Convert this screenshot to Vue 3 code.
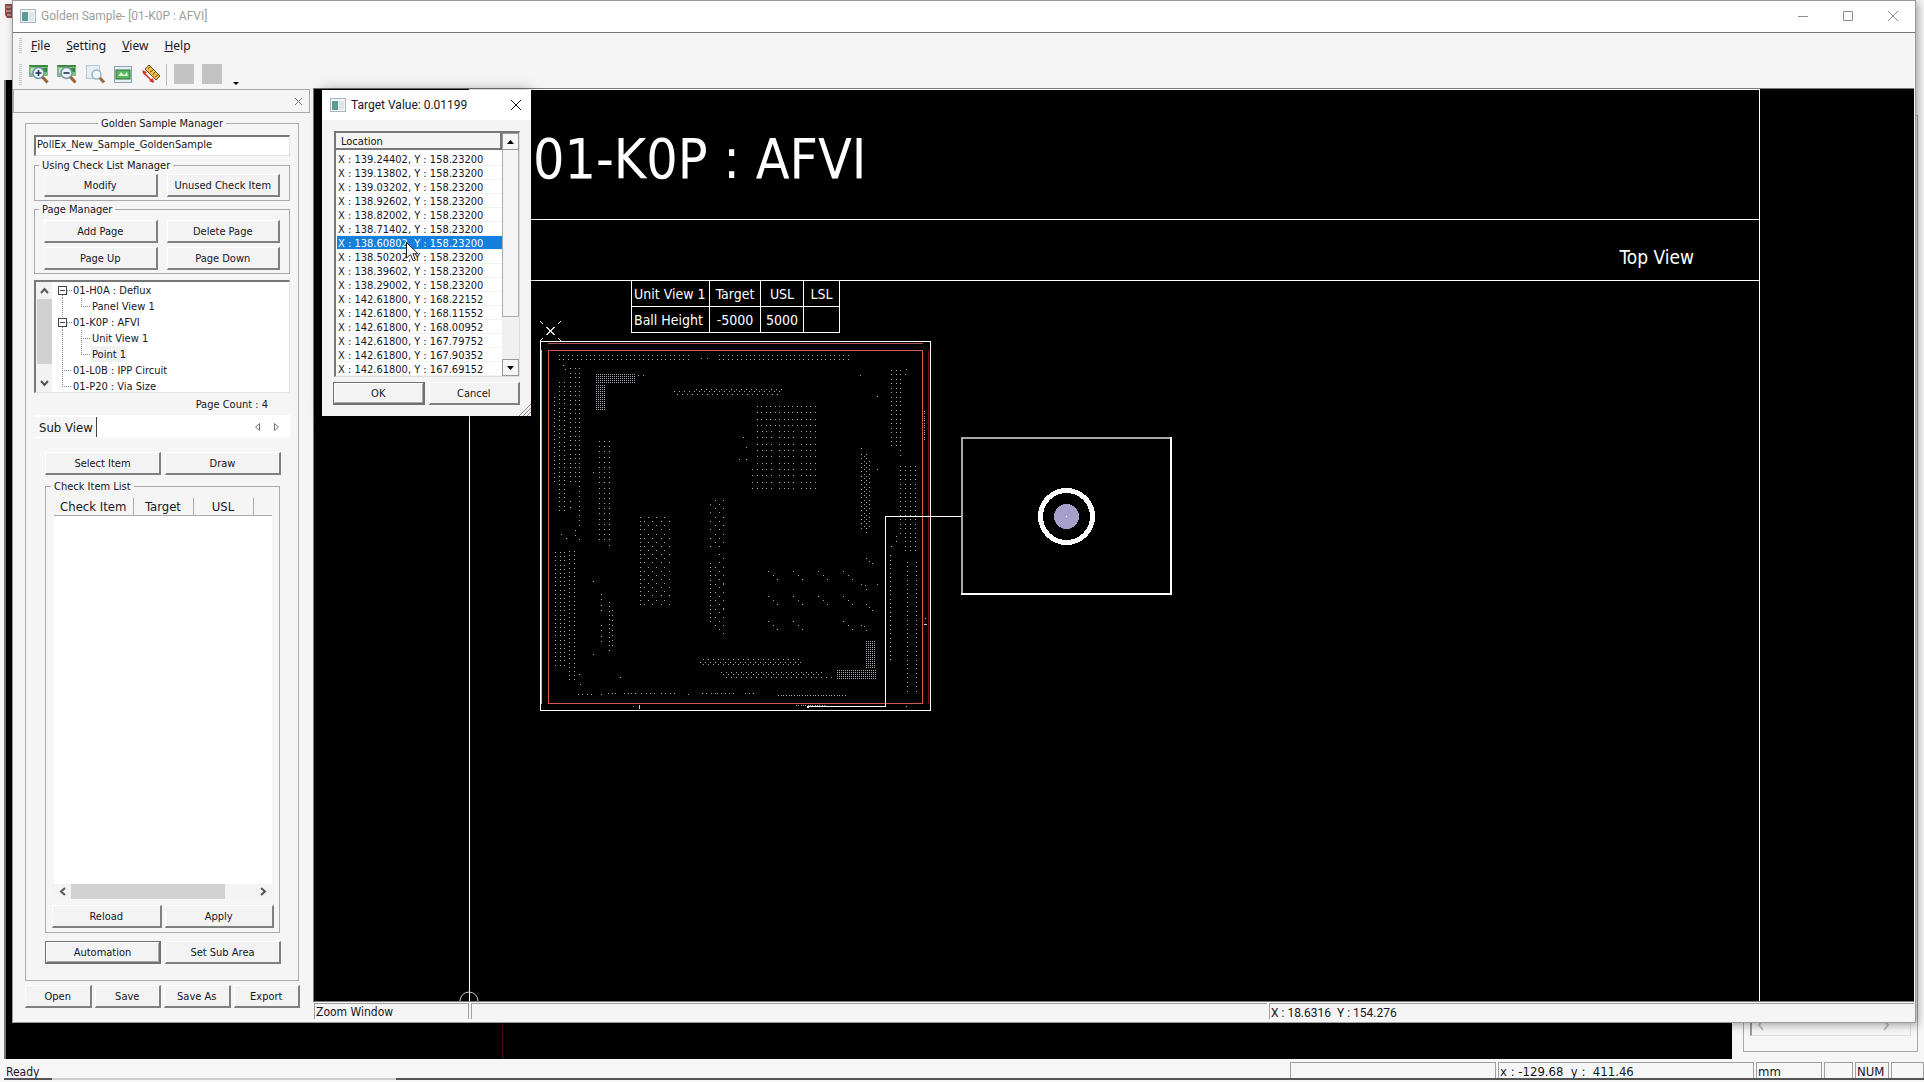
<script setup>
import { ref } from 'vue'

const menus = ['File', 'Setting', 'View', 'Help']
const sampleName = ref('PollEx_New_Sample_GoldenSample')

const tree = [
  { text: '01-H0A : Deflux', level: 0, box: true, path: 'M8 13V16M13 8H18' },
  { text: 'Panel View 1', level: 1, path: 'M8 0V16M27 0V8H36' },
  { text: '01-K0P : AFVI', level: 0, box: true, path: 'M8 0V3M8 13V16M13 8H18' },
  { text: 'Unit View 1', level: 1, path: 'M8 0V16M27 0V16M27 8H36' },
  { text: 'Point 1', level: 1, active: true, path: 'M8 0V16M27 0V8H36' },
  { text: '01-L0B : IPP Circuit', level: 0, path: 'M8 0V16M8 8H18' },
  { text: '01-P20 : Via Size', level: 0, path: 'M8 0V8H18' },
]

const locations = [
  ['139.24402', '158.23200'], ['139.13802', '158.23200'], ['139.03202', '158.23200'],
  ['138.92602', '158.23200'], ['138.82002', '158.23200'], ['138.71402', '158.23200'],
  ['138.60802', '158.23200'], ['138.50202', '158.23200'], ['138.39602', '158.23200'],
  ['138.29002', '158.23200'], ['142.61800', '168.22152'], ['142.61800', '168.11552'],
  ['142.61800', '168.00952'], ['142.61800', '167.79752'], ['142.61800', '167.90352'],
  ['142.61800', '167.69152'],
]
const selected = ref(6)

// Ball pads, in thirds of a pixel: x, y, columns, rows, column pitch, row pitch
const grids = [
  [88, 257, 30, 2, 13.3, 12], [515, 265, 2, 1, 18, 0], [568, 257, 30, 2, 13.3, 12],
  [121, 295, 3, 26, 14, 13.5], [88, 337, 2, 31, 15, 12.8], [73, 382, 1, 21, 0, 12.6],
  [149, 650, 1, 9, 0, 14.4], [199, 313, 20, 5, 6, 6], [199, 345, 5, 13, 6, 6],
  [326, 316, 2, 1, 14, 0], [208, 514, 3, 20, 15, 15.5],
  [682, 409, 14, 4, 13.3, 19], [682, 484, 4, 10, 13.5, 19], [748, 484, 4, 10, 13.5, 19],
  [814, 484, 4, 10, 13.5, 19], [668, 598, 1, 4, 0, 19],
  [1085, 301, 3, 18, 13, 13.3], [1111, 541, 1, 2, 0, 15], [1184, 424, 1, 13, 0, 7],
  [994, 553, 1, 18, 0, 13], [1010, 553, 1, 18, 0, 13], [1002, 560, 1, 17, 0, 13], [1018, 573, 1, 16, 0, 13],
  [1112, 589, 1, 16, 0, 13.3], [1126, 589, 3, 20, 15.5, 13.3],
  [1082, 857, 1, 25, 0, 13], [1132, 877, 2, 30, 28, 13.3],
  [331, 742, 4, 11, 24, 24.8], [343, 754, 4, 11, 25, 24.8], [331, 754, 1, 11, 0, 24.8], [418, 754, 1, 11, 0, 24.8],
  [541, 703, 1, 6, 0, 25.2], [568, 703, 1, 6, 0, 25.2], [555, 691, 2, 6, 26, 25.2],
  [541, 880, 1, 8, 0, 25], [568, 853, 1, 10, 0, 25], [555, 892, 2, 8, 26, 25],
  [541, 892, 1, 7, 0, 25], [581, 866, 1, 10, 0, 25],
  [76, 847, 3, 28, 13.5, 12.5], [118, 844, 2, 32, 16, 12.4],
  [214, 973, 1, 4, 0, 16], [214, 1066, 1, 4, 0, 16], [238, 997, 1, 12, 0, 13], [247, 1020, 1, 8, 0, 15],
  [433, 364, 22, 1, 15, 0], [499, 358, 18, 1, 15, 0], [443, 373, 21, 1, 15, 0],
  [520, 1168, 20, 1, 15, 0], [512, 1176, 21, 1, 15, 0], [520, 1184, 20, 1, 15, 0],
  [574, 1207, 21, 1, 15, 0], [581, 1214, 20, 1, 15, 0], [588, 1222, 22, 1, 15, 0],
  [1009, 1114, 5, 14, 6, 6], [921, 1201, 20, 5, 6, 6],
  [145, 1273, 4, 1, 13, 0], [214, 1273, 1, 1, 0, 0], [235, 1270, 3, 1, 11, 0], [283, 1270, 4, 1, 11, 0],
  [335, 1270, 4, 1, 13, 0], [394, 1270, 4, 1, 13, 0], [475, 1273, 1, 1, 0, 0], [517, 1270, 4, 1, 13, 0],
  [562, 1270, 5, 1, 12, 0], [645, 1270, 3, 1, 13, 0], [745, 1276, 26, 1, 8, 0], [799, 1306, 13, 1, 7, 0],
]
const singles = [
  [640, 502], [650, 532], [628, 568], [650, 568], [992, 316], [1042, 380], [1042, 598], [1042, 943],
  [190, 607], [190, 934], [190, 1153], [271, 1222], [101, 286], [107, 298], [1129, 298], [1126, 313],
  [994, 535], [1010, 787], [1100, 800], [1100, 814], [1085, 829], [95, 793], [109, 805], [137, 781],
  [149, 808], [137, 796], [121, 695], [121, 712], [149, 1213], [152, 1243], [239, 826], [1009, 865],
  [1018, 874], [1027, 880], [994, 943], [1006, 946], [1009, 958], [1009, 1003], [1018, 1012], [1027, 1021],
  [994, 1066], [1002, 1070], [1009, 1081], [310, 1309], [1129, 1309], [1186, 1046],
]
for (const y of [904, 979, 1053]) {
  for (const x of [716, 790, 865, 940]) {
    if (x === 865 && y === 1053) continue
    singles.push([x, y], [x + 14, y + 12], [x + 27, y + 24])
  }
}
function padPath() {
  const at = (x, y) => `M${Math.round((x - 1) / 3)} ${Math.round((y - 1) / 3)}h1v1h-1z`
  let d = ''
  for (const [x, y, nx, ny, dx, dy] of grids)
    for (let i = 0; i < nx; i++) for (let j = 0; j < ny; j++) d += at(x + i * dx, y + j * dy)
  for (const [x, y] of singles) d += at(x, y)
  return d
}
const pads = padPath()
</script>

<template>
  <div class="desk">
    <div class="back-app">
      <svg class="back-icon" width="7" height="16" viewBox="0 0 7 16"><path d="M0 1H7V15H2L0 12Z" fill="#8d4a48" /><path d="M1 4H6M1 8H6M2 12H6" stroke="#d8c0be" /></svg>
      <div class="back-canvas"><i class="red-axis"></i></div>
      <div class="back-side">
        <div class="back-group">
          <div class="back-list">
            <svg width="8" height="12" viewBox="0 0 8 12"><path d="M6 1L2 6L6 11" /></svg>
            <svg width="8" height="12" viewBox="0 0 8 12"><path d="M2 1L6 6L2 11" /></svg>
          </div>
        </div>
      </div>
    </div>
    <footer class="back-status">
      <span class="ready">Ready</span>
      <span class="cell w206"></span>
      <span class="cell w256">x : -129.68&nbsp; y :&nbsp; 411.46</span>
      <span class="cell w66">mm</span>
      <span class="cell w29"></span>
      <span class="cell w34">NUM</span>
      <span class="cell w33"></span>
    </footer>
    <div class="edge"><i class="dark short"></i><i class="pale"></i><i class="dark long"></i></div>

    <main class="window">
      <header class="titlebar">
        <svg width="16" height="14" viewBox="0 0 16 14"><rect x=".5" y=".5" width="15" height="13" fill="#f4f6f8" stroke="#a9b4bc" /><rect x="2" y="3" width="6" height="9" fill="#5c9c94" /><rect x="9" y="3" width="5" height="9" fill="#dfe6ea" /></svg>
        <h1>Golden Sample- [01-K0P : AFVI]</h1>
        <div class="win-buttons">
          <button aria-label="Minimize"><svg width="12" height="12"><path d="M1 6.5H11" /></svg></button>
          <button aria-label="Maximize"><svg width="12" height="12"><path d="M1.500 1.500H10.500V10.500H1.500Z" /></svg></button>
          <button aria-label="Close"><svg width="12" height="12"><path d="M1 1L11 11M11 1L1 11" /></svg></button>
        </div>
      </header>

      <nav class="menubar">
        <i class="grip"></i>
        <button v-for="m in menus" :key="m"><u>{{ m[0] }}</u>{{ m.slice(1) }}</button>
      </nav>

      <div class="toolbar">
        <i class="grip"></i>
        <button aria-label="Zoom in">
          <svg width="20" height="20" viewBox="0 0 20 20"><rect x="0" y="1" width="19" height="11" fill="#7cc47c" /><path d="M0 2H19" stroke="#3a8a44" stroke-width="2" /><path d="M0 12.500H4M.5 2V12" stroke="#8fa3b4" /><path d="M13 4H18V8H15Z" fill="#2f8a3c" /><path d="M2 4H8V9H2Z" fill="#b9e6b4" /><circle cx="9.500" cy="9" r="5.500" fill="#e8f3fb" stroke="#7892a8" stroke-width="1.500" /><path d="M6.500 9H12.500M9.500 6V12" stroke="#1c3250" stroke-width="1.600" /><path d="M13.500 13L18.500 18.500" stroke="#9a6230" stroke-width="3" /></svg>
        </button>
        <button aria-label="Zoom out">
          <svg width="20" height="20" viewBox="0 0 20 20"><rect x="0" y="1" width="19" height="11" fill="#7cc47c" /><path d="M0 2H19" stroke="#3a8a44" stroke-width="2" /><path d="M0 12.500H4M.5 2V12" stroke="#8fa3b4" /><path d="M13 4H18V8H15Z" fill="#2f8a3c" /><path d="M2 4H8V9H2Z" fill="#b9e6b4" /><circle cx="9.500" cy="9" r="5.500" fill="#e8f3fb" stroke="#7892a8" stroke-width="1.500" /><path d="M6.500 9H12.500" stroke="#1c3250" stroke-width="1.600" /><path d="M13.500 13L18.500 18.500" stroke="#9a6230" stroke-width="3" /></svg>
        </button>
        <button aria-label="Zoom window">
          <svg width="20" height="20" viewBox="0 0 20 20"><rect x="1.500" y="1.500" width="13" height="13" fill="#e3eff9" stroke="#7e99b4" stroke-dasharray="1 1" /><circle cx="11.500" cy="10.500" r="4.500" fill="#eff7fd" stroke="#9db2c4" stroke-width="1.500" /><path d="M15 14L19 18.500" stroke="#a56a36" stroke-width="3" /></svg>
        </button>
        <button aria-label="Zoom fit">
          <svg width="20" height="20" viewBox="0 0 20 20"><rect x="1.500" y="2.500" width="17" height="16" fill="#e2f0f8" stroke="#35506a" stroke-dasharray="1 1" /><rect x="3" y="6" width="14" height="9" fill="#5cb562" stroke="#2a7434" /><path d="M5 12L8 8L11 11L14 8L15 12Z" fill="#d2f2ca" /></svg>
        </button>
        <button aria-label="Measure">
          <svg width="20" height="20" viewBox="0 0 20 20"><path d="M8 1L19 12L15 16L4 5Z" fill="#f0bf4c" stroke="#6f4d14" /><path d="M9 3L7 5M12 6L9 8M14 8L12 11M17 11L14 13" stroke="#6f4d14" /><path d="M2 8L12 18" stroke="#d8302a" stroke-width="1.600" /><path d="M1 6L6 8L3 11ZM13 19L8 17L12 14Z" fill="#d8302a" /></svg>
        </button>
        <i class="rule"></i>
        <button aria-label="Tool 1" disabled class="blank"></button>
        <button aria-label="Tool 2" disabled class="blank"></button>
        <svg class="more" width="6" height="3" viewBox="0 0 6 3"><path d="M0 0H6L3 3Z" /></svg>
      </div>

      <div class="body">
        <aside class="side">
          <div class="pane-head"><button aria-label="Close pane"><svg width="9" height="9"><path d="M1 1L8 8M8 1L1 8" /></svg></button></div>
          <fieldset class="manager">
            <legend class="mid">Golden Sample Manager</legend>
            <input v-model="sampleName" class="name" aria-label="Golden sample name" />
            <fieldset class="using">
              <legend>Using Check List Manager</legend>
              <div class="pair"><button class="btn">Modify</button><button class="btn">Unused Check Item</button></div>
            </fieldset>
            <fieldset class="pages">
              <legend>Page Manager</legend>
              <div class="pair"><button class="btn">Add Page</button><button class="btn">Delete Page</button></div>
              <div class="pair"><button class="btn">Page Up</button><button class="btn">Page Down</button></div>
            </fieldset>
            <div class="tree">
              <div class="vbar">
                <button aria-label="Scroll up"><svg width="9" height="7"><path d="M1 6L4.500 2L8 6" /></svg></button>
                <i></i>
                <button aria-label="Scroll down"><svg width="9" height="7"><path d="M1 1L4.500 5L8 1" /></svg></button>
              </div>
              <ul>
                <li v-for="n in tree" :key="n.text">
                  <svg :width="n.level ? 37 : 18" height="16" shape-rendering="crispEdges">
                    <path :d="n.path" class="twig" />
                    <g v-if="n.box"><rect x="4" y="4" width="8" height="8" /><path d="M6 8H11" /></g>
                  </svg>
                  <span :class="{ active: n.active }">{{ n.text }}</span>
                </li>
              </ul>
            </div>
            <p class="count">Page Count : 4</p>
            <div class="tabs">
              <button class="tab">Sub View</button>
              <svg width="26" height="10" viewBox="0 0 26 10"><path d="M5.500 1.500V8.500L1.500 5ZM20.500 1.500V8.500L24.500 5Z" /></svg>
            </div>
            <div class="pair actions"><button class="btn">Select Item</button><button class="btn">Draw</button></div>
            <fieldset class="checks">
              <legend>Check Item List</legend>
              <div class="grid">
                <table><thead><tr><th class="c1">Check Item</th><th class="c2">Target</th><th class="c2">USL</th><th></th></tr></thead></table>
                <div class="hbar">
                  <button aria-label="Scroll left"><svg width="7" height="9"><path d="M6 1L2 4.500L6 8" /></svg></button>
                  <i></i>
                  <button aria-label="Scroll right"><svg width="7" height="9"><path d="M1 1L5 4.500L1 8" /></svg></button>
                </div>
              </div>
              <div class="pair tight"><button class="btn">Reload</button><button class="btn">Apply</button></div>
            </fieldset>
            <div class="pair autos"><button class="btn default">Automation</button><button class="btn">Set Sub Area</button></div>
          </fieldset>
          <div class="pair files"><button class="btn">Open</button><button class="btn">Save</button><button class="btn">Save As</button><button class="btn">Export</button></div>
        </aside>

        <section class="view">
          <div class="canvas">
            <div class="sheet">
              <div class="band head">01-K0P : AFVI</div>
              <div class="band sub">Top View</div>
              <table class="spec">
                <tbody>
                  <tr><th>Unit View 1</th><th>Target</th><th>USL</th><th>LSL</th></tr>
                  <tr><td>Ball Height</td><td>-5000</td><td>5000</td><td></td></tr>
                </tbody>
              </table>
            </div>
            <svg class="board" width="650" height="450" viewBox="0 0 650 450" shape-rendering="crispEdges" fill="none">
              <path d="M10 51h1v1h1v1h1v1h-1v-1h-1v-1h-1zM30 51h1v1h-1v1h-1v1h-1v-1h1v-1h1zM10 70h1v-1h1v-1h1v1h-1v1h-1v1h-1zM28 68h1v1h1v1h1v1h-1v-1h-1v-1h-1z" fill="#fff" />
              <path d="M16.500 57L24.500 65M24.500 57L16.500 65" stroke="#ddd" />
              <path d="M18 73.500H393" stroke="#b8505a" />
              <path d="M398.500 80V434" stroke="#7a0c14" />
              <path d="M11.500 80V434" stroke="#d9a9a4" />
              <rect x="18.500" y="80.500" width="374" height="353" stroke="#d8544e" />
              <rect x="10.500" y="71.500" width="390" height="369" stroke="#fff" />
              <path :d="pads" fill="#a9a9b4" />
              <path d="M109 435h1v4h-1zM394 354h3v1h-3z" fill="#ccc" />
              <path d="M278 436.500H355.500V246.500H431" stroke="#fff" />
              <rect x="277" y="436" width="2" height="2" fill="#fff" />
              <path d="M432 325V168H641" stroke="#a8a8a8" stroke-width="2" />
              <path d="M431 324H641V167" stroke="#fff" stroke-width="2" />
              <circle cx="536.500" cy="246.500" r="26" stroke="#fff" stroke-width="5" />
              <circle cx="536.500" cy="246.500" r="12.500" fill="#a69fc9" />
              <rect x="536" y="246" width="1" height="1" fill="#fff" />
            </svg>
            <svg class="origin" width="20" height="10" viewBox="0 0 20 10"><circle cx="10" cy="10" r="9" fill="none" stroke="#ccc" /></svg>
          </div>
          <footer class="status">
            <span class="s1">Zoom Window</span><span class="s2"></span><span class="s3">X : 18.6316&nbsp; Y : 154.276</span>
          </footer>
        </section>
      </div>

      <div class="dialog" role="dialog" aria-label="Target Value">
        <header>
          <svg width="16" height="14" viewBox="0 0 16 14"><rect x=".5" y=".5" width="15" height="13" fill="#f4f6f8" stroke="#a9b4bc" /><rect x="2" y="3" width="6" height="9" fill="#5c9c94" /><rect x="9" y="3" width="5" height="9" fill="#dfe6ea" /></svg>
          <h2>Target Value: 0.01199</h2>
          <button aria-label="Close"><svg width="12" height="12"><path d="M1 1L11 11M11 1L1 11" /></svg></button>
        </header>
        <div class="list">
          <table>
            <thead><tr><th>Location</th></tr></thead>
            <tbody>
              <tr v-for="(p, i) in locations" :key="i" :class="{ on: i === selected }" @click="selected = i"><td>X : {{ p[0] }}, Y : {{ p[1] }}</td></tr>
            </tbody>
          </table>
          <div class="classic">
            <button aria-label="Scroll up"><svg width="7" height="4"><path d="M0 4H7L3.500 0Z" /></svg></button>
            <i></i><b></b>
            <button aria-label="Scroll down"><svg width="7" height="4"><path d="M0 0H7L3.500 4Z" /></svg></button>
          </div>
        </div>
        <div class="pair answer"><button class="btn default">OK</button><button class="btn">Cancel</button></div>
        <svg class="sizer" width="12" height="12"><path d="M0 12L12 0M4 12L12 4M8 12L12 8" /></svg>
        <svg class="pointer" width="13" height="20" viewBox="0 0 13 20"><path d="M.5 .5V16L4.500 12.500L7.200 18.800L9.500 17.800L6.900 11.700H12Z" fill="#fff" stroke="#222" /></svg>
      </div>
    </main>
  </div>
</template>

<style>
body { margin: 0; }
</style>

<style scoped>
* { box-sizing: border-box; }
.desk { position: relative; min-height: 100vh; display: flex; flex-direction: column; background: #f6f6f6; color: #16161f; font: 11px/14px "DejaVu Sans Condensed", "DejaVu Sans", sans-serif; overflow: hidden; }
button { font: inherit; color: inherit; background: none; border: 0; padding: 0; margin: 0; }
i { display: block; }
svg { display: block; flex: none; }

.back-app { flex: 1; display: flex; padding: 80px 0 0 4px; }
.back-icon { position: absolute; left: 5px; top: 3px; }
.back-canvas { flex: 1; background: #000; border-left: 2px solid #777; }
.red-axis { width: 1px; height: 100%; margin-left: 496px; background: #5a0808; }
.back-side { width: 192px; display: flex; padding: 35px 6px 7px 11px; }
.back-group { flex: 1; display: flex; border: 1px solid #a8a8a8; padding: 0 6px 15px; }
.back-list { flex: 1; display: flex; align-items: flex-end; justify-content: space-between; border: solid #ddd; border-width: 0 1px 1px 2px; border-left-color: #999; padding: 0 20px 4px 5px; }
.back-list svg { fill: none; stroke: #bbb; stroke-width: 2; }
.back-status { display: flex; height: 19px; padding-top: 3px; gap: 2px; font-size: 13px; line-height: 18px; }
.ready { flex: 1; padding-left: 2px; font-size: 12px; line-height: 20px; }
.cell { height: 16px; border: solid #a0a0a0; border-width: 1px 1px 0; padding-left: 1px; white-space: nowrap; }
.w206 { width: 206px; } .w256 { width: 256px; } .w66 { width: 66px; } .w29 { width: 29px; } .w34 { width: 34px; } .w33 { width: 33px; }
.back-status { padding-left: 4px; }
.edge { display: flex; height: 4px; padding: 0 0 2px 4px; }
.dark { background: #555; } .short { width: 48px; } .pale { width: 344px; background: #ccc; } .long { flex: 1; }

.window { position: absolute; inset: 0 8px 59px 12px; display: flex; flex-direction: column; background: #f5f5f5; border: 1px solid #999; box-shadow: 2px 2px 8px rgba(0, 0, 0, .35); }
.titlebar { height: 31px; flex: none; display: flex; align-items: center; background: #fff; padding: 0 0 2px 7px; gap: 5px; }
h1, h2 { margin: 0; font: 12px/18px Roboto, "Noto Sans", sans-serif; }
h1 { flex: 1; color: #9c9c9c; }
.win-buttons { display: flex; }
.win-buttons button { width: 45px; display: grid; place-items: center; }
.win-buttons svg { fill: none; stroke: #8e8e8e; }
.menubar { display: flex; align-items: center; height: 28px; border-top: 1px solid #777; padding: 0 0 2px 6px; font: 12px/18px "Noto Sans", "Open Sans", sans-serif; flex: none; }
.grip { width: 3px; height: 16px; background: repeating-linear-gradient(#c8c8c8 0 1px, transparent 1px 2px); margin-right: 9px; }
.menubar button { margin-right: 16px; }
.toolbar { display: flex; height: 28px; flex: none; padding: 4px 0 0 6px; gap: 8px; }
.toolbar .grip { height: 22px; margin: 0; }
.rule { width: 1px; height: 22px; background: #bbb; margin: 0 -1px 0 -3px; }
.toolbar button { width: 20px; height: 20px; }
.toolbar .grip + button { margin-left: -1px; }
.toolbar .blank { background: #c2c2c2; }
.more { margin: 18px 0 0 3px; }
.body { flex: 1; display: flex; min-height: 0; }

.side { width: 300px; flex: none; display: flex; flex-direction: column; padding-top: 1px; }
.pane-head { height: 24px; flex: none; display: flex; align-items: center; justify-content: flex-end; margin-right: 3px; border: 1px solid #a8a8a8; padding-right: 6px; }
.pane-head svg { stroke: #777; fill: none; }
fieldset { min-width: 0; margin: 0; padding: 0; border: 1px solid #aaa; display: flex; flex-direction: column; }
legend { padding: 0 3px; margin-left: -5px; height: 14px; line-height: 16px; }
legend.mid { margin: 0 auto; }
.manager { flex: 1; margin: 3px 14px 0 12px; padding: 5px 8px 16px; }
.name { font: inherit; color: inherit; height: 21px; flex: none; border: solid #e4e4e4; border-width: 2px 1px 1px 2px; border-top-color: #777; border-left-color: #777; background: #fff; padding: 0 0 4px 1px; width: 100%; }
.using { margin-top: 2px; padding: 2px 9px 3px; }
.pages { margin-top: 1px; padding: 4px 9px 3px; gap: 4px; }
.pair { display: flex; gap: 9px; flex: none; }
.btn { flex: 1 1 0; height: 23px; padding-top: 2px; background: #f3f3f3; border: 1px solid #fff; border-right: 2px solid #808080; border-bottom: 2px solid #808080; white-space: nowrap; }
.btn.default { border: 1px solid #707070; border-right-width: 2px; border-bottom-width: 2px; box-shadow: inset 1px 1px #fff, inset -1px -1px #a8a8a8; }
.tree { display: flex; height: 113px; margin-top: 6px; flex: none; background: #fff; border: solid #e4e4e4; border-width: 2px 1px 1px 2px; border-top-color: #777; border-left-color: #777; overflow: hidden; }
.vbar { width: 16px; display: flex; flex-direction: column; background: #f2f2f2; padding: 0 0 0 1px; }
.vbar button { height: 17px; display: grid; place-items: center; }
.vbar i { height: 65px; background: #d0d0d0; margin-bottom: auto; }
.vbar svg, .hbar svg { fill: none; stroke: #555; stroke-width: 2; }
ul { list-style: none; margin: 0; padding: 0 0 0 2px; }
li { display: flex; align-items: center; height: 16px; white-space: nowrap; }
li svg { fill: #fff; stroke: #444; }
.twig { fill: none; stroke: #888; stroke-dasharray: 1 1; }
li span { padding: 2px 1px 0; }
li .active { background: #f0f0f0; }
.count { margin: 0 22px 0 0; height: 22px; line-height: 24px; text-align: right; flex: none; }
.tabs { display: flex; align-items: center; justify-content: space-between; height: 23px; flex: none; background: #fff; padding-right: 10px; }
.tab { font-size: 13px; height: 20px; padding: 2px 3px 0 5px; background: #f5f5f5; border-right: 1px solid #444; }
.tabs svg { fill: none; stroke: #777; }
.actions, .autos { gap: 4px; margin: 14px 9px 0 11px; }
.autos { margin-top: 8px; }
.checks { flex: 1; margin: 4px 10px 0 11px; padding: 5px 5px 4px 6px; }
.checks legend { margin-left: -1px; }
.grid { flex: 1; display: flex; flex-direction: column; background: #fff; margin: 0 2px; }
.grid table { border-collapse: collapse; width: 100%; table-layout: fixed; }
.grid th { height: 17px; padding: 1px 0 0; font-weight: normal; font-size: 13px; background: #f5f5f5; border-bottom: 1px solid #aaa; border-right: 1px solid #aaa; }
.grid th:last-child { border-right: 0; }
.c1 { width: 79px; } .c2 { width: 60px; }
.hbar { display: flex; height: 15px; margin-top: auto; background: #f4f4f4; }
.hbar button { width: 17px; display: grid; place-items: center; }
.hbar i { width: 154px; background: #d2d2d2; margin-right: auto; }
.tight { gap: 3px; margin-top: 6px; }
.files { gap: 3px; padding: 4px 13px 14px 12px; }

.view { flex: 1; min-width: 0; display: flex; flex-direction: column; padding-right: 1px; }
.canvas { position: relative; flex: 1; background: #000; border: solid #777; border-width: 1px 0 1px 1px; overflow: hidden; color: #fff; }
.sheet { position: absolute; inset: 0 154px 0 155px; border: solid #fff; border-width: 1px 1px 0; }
.band { border-bottom: 1px solid #fff; display: flex; align-items: center; }
.head { height: 130px; padding: 8px 0 0 63px; font-size: 55px; line-height: 60px; }
.sub { height: 61px; padding: 14px 65px 0 0; justify-content: flex-end; font-size: 19px; line-height: 22px; }
.spec { margin: -1px 0 0 161px; border-collapse: collapse; table-layout: fixed; width: 209px; font-size: 14px; }
.spec th, .spec td { font-weight: normal; height: 26px; padding: 0; border: 1px solid #fff; text-align: center; white-space: nowrap; }
.spec th:nth-child(1) { width: 78px; } .spec th:nth-child(2) { width: 51px; } .spec th:nth-child(3) { width: 43px; }
.spec td:first-child, .spec th:first-child { text-align: left; padding-left: 2px; }
.board { position: absolute; left: 216px; top: 181px; }
.origin { position: absolute; left: 145px; bottom: 0; }
.status { display: flex; height: 20px; padding: 1px 0 3px 1px; gap: 2px; font-size: 13px; line-height: 16px; }
.status span { border: solid #a0a0a0; border-width: 1px 0 0 1px; padding-left: 1px; }
.status .s1 { width: 155px; border-right-width: 1px; font-size: 12px; } .s2 { flex: 1; } .status .s3 { width: 645px; font: 12px/18px Roboto, "Noto Sans", sans-serif; }

.dialog { position: absolute; left: 309px; top: 89px; width: 209px; height: 326px; background: #f4f4f4; box-shadow: 0 0 12px rgba(0, 0, 0, .35); }
.dialog header { display: flex; align-items: center; height: 30px; gap: 5px; padding: 0 9px 0 8px; background: #fff; }
h2 { flex: 1; white-space: nowrap; }
.dialog header svg:last-child { stroke: #111; fill: none; }
.list { display: flex; margin: 11px 11px 0 12px; height: 246px; border: solid #ddd; border-width: 2px 1px 1px 2px; border-top-color: #777; border-left-color: #777; background: #fff; overflow: hidden; }
.list table { flex: 1; border-collapse: collapse; display: block; }
.list thead, .list tbody, .list tr { display: block; }
.list th { display: block; height: 17px; line-height: 17px; text-align: left; font-weight: normal; padding: 0 0 0 5px; background: #f4f4f4; border: solid #fff; border-width: 0 2px 2px 0; border-right-color: #777; border-bottom-color: #777; margin-bottom: 2px; }
.list td { display: block; height: 14px; padding: 0 0 0 1px; margin-left: 1px; white-space: nowrap; border-bottom: 1px solid #f2f2f2; line-height: 16px; }
.on td { background: #1380dd; color: #fff; }
.classic { width: 17px; display: flex; flex-direction: column; background: #f0f0f0; }
.classic button { height: 17px; display: grid; place-items: center; border: 1px solid #999; background: #f6f6f6; }
.classic i { height: 167px; border: 1px solid #aaa; border-top: 0; background: #f5f5f5; }
.classic b { flex: 1; }
.answer { gap: 4px; margin: 5px 11px 0 11px; }
.sizer { position: absolute; right: 0; bottom: 0; stroke: #888; }
.pointer { position: absolute; left: 84px; top: 152px; }
</style>
